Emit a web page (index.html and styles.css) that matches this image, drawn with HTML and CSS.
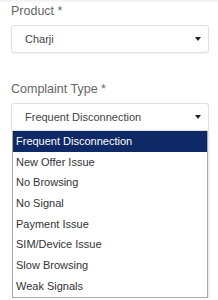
FILE: index.html
```html
<!DOCTYPE html>
<html lang="en">
  <head>
    <meta charset="UTF-8" />
    <meta name="viewport" content="width=device-width, initial-scale=1.0" />
    <title>Complaint Form</title>
    <link rel="stylesheet" href="styles.css">
  </head>
  <body>
    <div class="form">
      <div class="form-group">
        <label class="field-label">Product *</label>
        <div class="select">
          <span class="select-value">Charji</span>
          <span class="caret"></span>
        </div>
      </div>

      <div class="form-group complaint">
        <label class="field-label">Complaint Type *</label>
        <div class="select">
          <span class="select-value">Frequent Disconnection</span>
          <span class="caret"></span>
        </div>
        <ul class="options">
          <li class="selected">Frequent Disconnection</li>
          <li>New Offer Issue</li>
          <li>No Browsing</li>
          <li>No Signal</li>
          <li>Payment Issue</li>
          <li>SIM/Device Issue</li>
          <li>Slow Browsing</li>
          <li>Weak Signals</li>
        </ul>
      </div>
    </div>
  </body>
</html>
```

FILE: styles.css
```css
body {
  font-family: "Liberation Sans", Arial, sans-serif;
  background-color: white;
  margin: 0;
  padding: 0;
}
.form {
  padding: 4px 9px 0 11px;
  box-shadow: inset 0 3px 3px -2px rgba(0, 0, 0, 0.08);
}
.form-group {
  margin-bottom: 29px;
}
.form-group.complaint {
  margin-bottom: 0;
}
.field-label {
  display: block;
  font-size: 12.5px;
  line-height: 15px;
  color: #666;
  margin-bottom: 6px;
}
.select {
  display: flex;
  align-items: center;
  justify-content: space-between;
  height: 28px;
  box-sizing: border-box;
  padding: 0 7px 0 13px;
  border: 1px solid #e0e0e0;
  border-radius: 3px;
  box-shadow: 0 1px 2px rgba(0, 0, 0, 0.06);
  font-size: 11px;
  color: #444;
}
.caret {
  width: 0;
  height: 0;
  border-left: 3.5px solid transparent;
  border-right: 3.5px solid transparent;
  border-top: 4px solid #222;
}
.complaint .select {
  border-bottom-left-radius: 0;
  border-bottom-right-radius: 0;
}
.options {
  list-style: none;
  margin: 0 1px 0 1px;
  padding: 0;
  border: 1px solid #a8a8a8;
  border-top: none;
  box-shadow: 1px 1px 2px rgba(0, 0, 0, 0.12);
  font-size: 11px;
  color: #333;
}
.options li {
  height: 20.7px;
  line-height: 20.7px;
  padding-left: 3px;
}
.options li.selected {
  background-color: #0e2966;
  color: white;
}
```
